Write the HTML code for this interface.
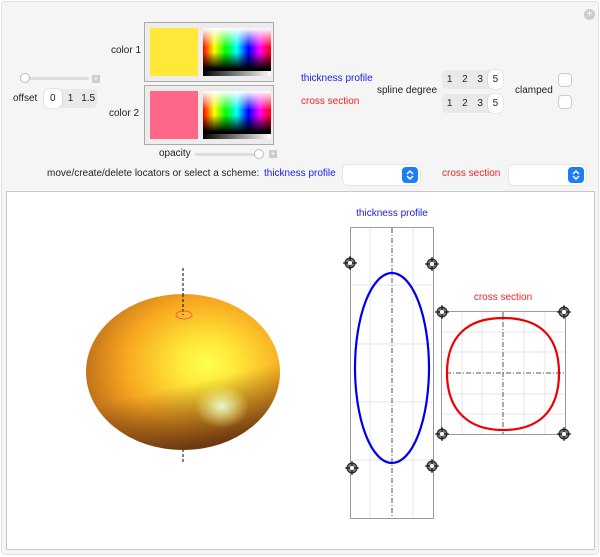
<!DOCTYPE html>
<html><head><meta charset="utf-8"><style>
*{box-sizing:border-box;margin:0;padding:0}
body{width:600px;height:557px;background:#fff;font-family:"Liberation Sans",sans-serif;font-size:10px;color:#222;position:relative;overflow:hidden}
.panel{position:absolute;left:1px;top:1px;width:598px;height:554px;background:#f5f5f5;border:1px solid #e2e2e2;border-radius:4px}
.frame{position:absolute;left:6px;top:191px;width:589px;height:359px;background:#fff;border:1px solid #c8c8c8}
.a{position:absolute;white-space:nowrap}
.blue{color:#1a1ae6}.red{color:#f02020}
.seg{position:absolute;height:19px;background:#e9e9e9;border-radius:5px;display:flex;font-size:10px}
.seg span{flex:1;text-align:center;line-height:19px}
.seg span.on{background:#fff;border-radius:5px;box-shadow:0 0 1px #999}
.cb{position:absolute;width:14px;height:14px;background:#fff;border:1px solid #ccc;border-radius:4px}
.pick{position:absolute;width:130px;height:60px;border:1px solid #aaa;background:#ececec}
.sw{position:absolute;left:5px;top:5px;width:48px;height:48px}
.grad{position:absolute;left:58px;top:5px;width:68px;height:48px;background:linear-gradient(to bottom,rgba(255,255,255,1),rgba(255,255,255,0) 40%,rgba(0,0,0,0) 50%,#000 85%),linear-gradient(to right,red,#ff0,#0f0,#0ff,#00f,#f0f,red)}
.gb{position:absolute;left:58px;top:48px;width:68px;height:5px;background:linear-gradient(to right,#000,#fff)}
.sl{position:absolute;height:3px;background:#ddd;border-radius:2px}
.kn{position:absolute;width:10px;height:10px;border-radius:50%;background:#fff;border:1px solid #bbb}
.pl{position:absolute;width:8px;height:8px;background:#ccc;color:#fff;font-size:8px;line-height:8px;text-align:center}
.dd{position:absolute;width:77px;height:20px;background:#fff;border-radius:4px;box-shadow:0 0 1px #999}
.dd i{position:absolute;right:2px;top:2px;width:16px;height:16px;background:#1e7cf4;border-radius:4px}
</style></head><body>
<div class="panel"></div>
<div class="a" style="left:584px;top:9px;width:11px;height:11px;border-radius:50%;background:#ccc;color:#fff;font-size:10px;line-height:11px;text-align:center">+</div>

<div class="sl" style="left:22px;top:77px;width:67px"></div>
<div class="kn" style="left:20px;top:73px"></div>
<div class="pl" style="left:92px;top:75px">+</div>
<div class="a" style="left:13px;top:93px">offset</div>
<div class="seg" style="left:44px;top:89px;width:53px"><span class="on">0</span><span>1</span><span>1.5</span></div>

<div class="a" style="left:111px;top:45px">color 1</div>
<div class="pick" style="left:144px;top:22px"><div class="sw" style="background:#ffe838"></div><div class="grad"></div><div class="gb"></div></div>
<div class="a" style="left:109px;top:108px">color 2</div>
<div class="pick" style="left:144px;top:85px"><div class="sw" style="background:#ff6789"></div><div class="grad"></div><div class="gb"></div></div>
<div class="a" style="left:159px;top:148px">opacity</div>
<div class="sl" style="left:195px;top:153px;width:68px"></div>
<div class="kn" style="left:254px;top:149px"></div>
<div class="pl" style="left:269px;top:150px">+</div>

<div class="a blue" style="left:301px;top:73px">thickness profile</div>
<div class="a red" style="left:301px;top:96px">cross section</div>
<div class="a" style="left:377px;top:85px">spline degree</div>
<div class="seg" style="left:442px;top:70px;width:61px"><span>1</span><span>2</span><span>3</span><span class="on">5</span></div>
<div class="seg" style="left:442px;top:94px;width:61px"><span>1</span><span>2</span><span>3</span><span class="on">5</span></div>
<div class="a" style="left:515px;top:85px">clamped</div>
<div class="cb" style="left:558px;top:73px"></div>
<div class="cb" style="left:558px;top:95px"></div>

<div class="a" style="left:47px;top:168px">move/create/delete locators or select a scheme:</div>
<div class="a blue" style="left:264px;top:168px">thickness profile</div>
<div class="dd" style="left:343px;top:165px"><i><svg width="16" height="16"><path d="M5 7L8 4L11 7M5 9L8 12L11 9" fill="none" stroke="#fff" stroke-width="1.5"/></svg></i></div>
<div class="a red" style="left:442px;top:168px">cross section</div>
<div class="dd" style="left:509px;top:165px"><i><svg width="16" height="16"><path d="M5 7L8 4L11 7M5 9L8 12L11 9" fill="none" stroke="#fff" stroke-width="1.5"/></svg></i></div>

<div class="frame"></div>
<svg class="a" style="left:0;top:0" width="600" height="557">
<defs>
<radialGradient id="g1" cx="0.62" cy="0.45" r="0.75">
<stop offset="0" stop-color="#ffff50"/><stop offset="0.2" stop-color="#ffe838"/><stop offset="0.55" stop-color="#f8a820"/><stop offset="0.85" stop-color="#c07018"/><stop offset="1" stop-color="#8a4818"/>
</radialGradient>
<linearGradient id="g3" x1="0.3" y1="0.3" x2="0.5" y2="1">
<stop offset="0.45" stop-color="#5a2a10" stop-opacity="0"/><stop offset="1" stop-color="#5a2a10" stop-opacity="0.85"/>
</linearGradient>
<radialGradient id="g2" cx="0.7" cy="0.72" r="0.14"><stop offset="0" stop-color="#eaffe0" stop-opacity="0.95"/><stop offset="1" stop-color="#ffff80" stop-opacity="0"/></radialGradient>
<g id="loc"><circle r="5" fill="#777" stroke="#222"/><path d="M-7 0H7M0-7V7" stroke="#000" stroke-width="1"/><circle r="2" fill="#fff"/></g>
</defs>
<path d="M183 268V294M183 449V462" stroke="#000" stroke-dasharray="3,2"/>
<ellipse cx="183" cy="372" rx="97" ry="78" fill="url(#g1)"/>
<ellipse cx="183" cy="372" rx="97" ry="78" fill="url(#g3)"/>
<ellipse cx="183" cy="372" rx="97" ry="78" fill="url(#g2)"/>
<path d="M183 294V315" stroke="#000" stroke-dasharray="3,2"/>
<ellipse cx="184" cy="315" rx="8" ry="4" fill="none" stroke="#f06040"/>

<text x="392" y="216" font-size="10" fill="#1a1ae6" text-anchor="middle" font-family="Liberation Sans">thickness profile</text>
<rect x="350.5" y="227.5" width="83" height="291" fill="#fff" stroke="#999"/>
<path d="M370 228V518M413 228V518M351 285H433M351 344H433M351 402H433M351 460H433" stroke="#e4e4e4"/>
<path d="M392 228V518" stroke="#555" stroke-dasharray="5,2,1,2"/>
<ellipse cx="392" cy="368" rx="37" ry="95" fill="none" stroke="#0000ee" stroke-width="2.2"/>
<use href="#loc" x="350" y="263"/><use href="#loc" x="432" y="264"/><use href="#loc" x="352" y="468"/><use href="#loc" x="432" y="466"/>

<text x="503" y="300" font-size="10" fill="#f02020" text-anchor="middle" font-family="Liberation Sans">cross section</text>
<rect x="441.5" y="311.5" width="124" height="123" fill="#fff" stroke="#999"/>
<path d="M462 312V434M482 312V434M524 312V434M545 312V434M442 332H565M442 352H565M442 394H565M442 414H565" stroke="#e4e4e4"/>
<path d="M503 312V434M446 373H565" stroke="#555" stroke-dasharray="5,2,1,2"/>
<path d="M503 318C535 318 559 332 559 373C559 412 538 430 503 430C468 430 447 410 447 373C447 336 468 318 503 318Z" fill="none" stroke="#ee0000" stroke-width="2.2"/>
<use href="#loc" x="442" y="312"/><use href="#loc" x="564" y="312"/><use href="#loc" x="442" y="434"/><use href="#loc" x="564" y="434"/>
</svg>
</body></html>
